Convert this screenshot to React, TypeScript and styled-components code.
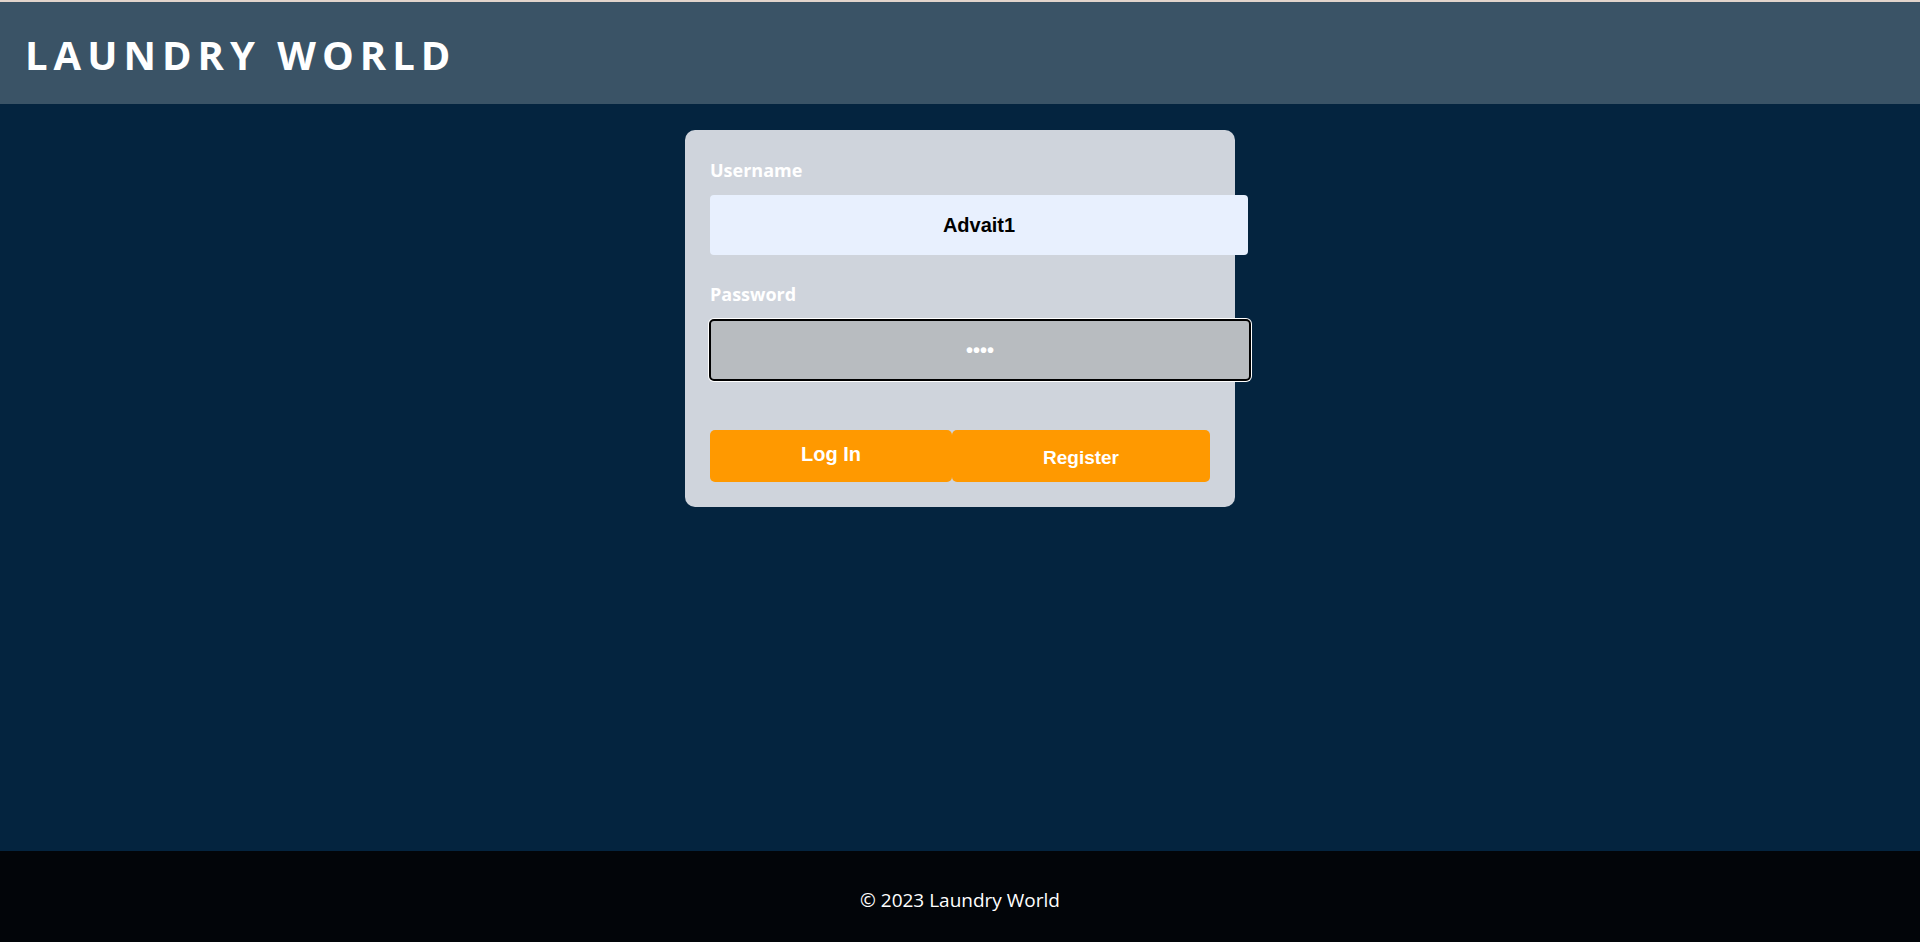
import React, { useState } from "react"
import styled, { createGlobalStyle } from "styled-components"

const GlobalStyle = createGlobalStyle`
  html, body {
    margin: 0;
    padding: 0;
    height: 100%;
  }
  body {
    font-family: "Open Sans", "Noto Sans", sans-serif;
    background: #04243f;
  }
  #root {
    min-height: 100vh;
  }
`

const Page = styled.div`
  display: flex;
  flex-direction: column;
  min-height: 100vh;
`

const Header = styled.header`
  height: 102px;
  border-top: 2px solid #e2d4cc;
  background: #3a5366;
  display: flex;
  align-items: center;
  padding: 0 25px;
`

const Brand = styled.h1`
  margin: 0;
  color: #fff;
  font-family: "Open Sans", sans-serif;
  font-weight: 700;
  font-size: 40px;
  letter-spacing: 0.15em;
  padding-top: 2px;
`

const Main = styled.main`
  flex: 1;
  background: #04243f;
  display: flex;
  justify-content: center;
  align-items: flex-start;
  padding-top: 26px;
`

const Card = styled.form`
  width: 500px;
  padding: 28px 25px 25px;
  background: #cfd4dc;
  border-radius: 10px;
  display: flex;
  flex-direction: column;
`

const Label = styled.label`
  color: #fff;
  font-family: "Open Sans", sans-serif;
  font-weight: 700;
  font-size: 18px;
  line-height: 25px;
  margin-bottom: 12px;
`

const Input = styled.input<{ $focused?: boolean }>`
  width: 100%;
  box-sizing: content-box;
  height: 20px;
  padding: 20px 19px;
  margin: 0 0 ${p => (p.$focused ? "34px" : "27px")};
  border: none;
  border-radius: 4px;
  background: ${p => (p.$focused ? "#b8bcc0" : "#e8f0fe")};
  color: ${p => (p.$focused ? "#fff" : "#000")};
  caret-color: #fff;
  font-family: "Liberation Sans", Arial, sans-serif;
  font-weight: 700;
  font-size: 20px;
  text-align: center;
  outline: none;
  ${p =>
    p.$focused &&
    `
    margin-left: -1px;
    border: 2px solid #000;
    box-shadow: 0 0 0 1px #fff;
    border-radius: 5px;
    padding: 19px 19px;
  `}
`

const Buttons = styled.div`
  display: flex;
  margin-top: 15px;
`

const Button = styled.button<{ $lower?: boolean }>`
  flex: 1 1 auto;
  height: 52px;
  border: none;
  border-radius: 5px;
  background: #ff9900;
  color: #fff;
  font-family: "Liberation Sans", Arial, sans-serif;
  font-weight: 700;
  font-size: ${p => (p.$lower ? "19px" : "20px")};
  padding: ${p => (p.$lower ? "4px 0 0" : "0 0 4px")};
  cursor: pointer;
`

const Footer = styled.footer`
  height: 91px;
  background: #020509;
  display: flex;
  align-items: center;
  justify-content: center;
`

const Copy = styled.p`
  margin: 0;
  color: #fff;
  font-family: "Open Sans", sans-serif;
  font-size: 19px;
  padding-top: 6px;
`

const App: React.FC = () => {
  const [username, setUsername] = useState("Advait1")
  const [password, setPassword] = useState("1234")

  return (
    <>
      <GlobalStyle />
      <Page>
        <Header>
          <Brand>LAUNDRY WORLD</Brand>
        </Header>
        <Main>
          <Card onSubmit={e => e.preventDefault()}>
            <Label htmlFor="username">Username</Label>
            <Input
              id="username"
              value={username}
              onChange={e => setUsername(e.target.value)}
            />
            <Label htmlFor="password">Password</Label>
            <Input
              id="password"
              type="password"
              $focused
              autoFocus
              value={password}
              onChange={e => setPassword(e.target.value)}
            />
            <Buttons>
              <Button type="submit">Log In</Button>
              <Button type="button" $lower>Register</Button>
            </Buttons>
          </Card>
        </Main>
        <Footer>
          <Copy>© 2023 Laundry World</Copy>
        </Footer>
      </Page>
    </>
  )
}

export default App
